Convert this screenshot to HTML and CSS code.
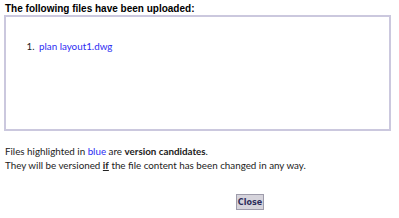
FILE: index.html
```html
<!DOCTYPE html>
<html lang="en">
<head>
  <meta charset="UTF-8">
  <title>Upload complete</title>
  <link rel="stylesheet" href="styles.css">
</head>
<body>
  <div class="upload-dialog">
    <h1 class="title">The following files have been uploaded:</h1>

    <div class="file-box">
      <ol class="file-list">
        <li class="candidate">plan layout1.dwg</li>
      </ol>
    </div>

    <p class="note">
      Files highlighted in <span class="blue">blue</span> are <b>version candidates</b>.<br>
      They will be versioned <b><u>if</u></b> the file content has been changed in any way.
    </p>

    <div class="actions">
      <button class="close-btn">Close</button>
    </div>
  </div>
</body>
</html>
```

FILE: styles.css
```css
body {
  margin: 0;
  background: #fff;
  font-family: Lato, "Open Sans", sans-serif;
  color: #222;
}

.upload-dialog {
  display: flex;
  flex-direction: column;
  padding: 3px 8px 0 4px;
}

.title {
  margin: 0 0 0 1px;
  font-family: "Liberation Sans", Arial, sans-serif;
  font-size: 10px;
  line-height: 12px;
  font-weight: bold;
  color: #000;
}

.file-box {
  height: 112px;
  border: 2px solid #cbc8de;
  background: #fff;
}

.file-list {
  margin: 22px 0 0 0;
  padding-left: 31px;
  font-size: 9.8px;
  line-height: 14px;
}

.candidate {
  padding-left: 2px;
  color: #2c2cf2;
}
.candidate::marker {
  color: #222;
}

.note {
  margin: 13px 0 0 1px;
  font-size: 9.8px;
  line-height: 14px;
}

.blue {
  color: #2c2cf2;
}

.actions {
  display: flex;
  padding-left: 232px;
  margin-top: 22px;
}

.close-btn {
  width: 28px;
  height: 16px;
  font-family: "DejaVu Sans", sans-serif;
  font-size: 8px;
  font-weight: bold;
  color: #2d2d5a;
  background: #d6d4dc;
  border: 1px solid #9e9cab;
  padding: 0;
}
```
